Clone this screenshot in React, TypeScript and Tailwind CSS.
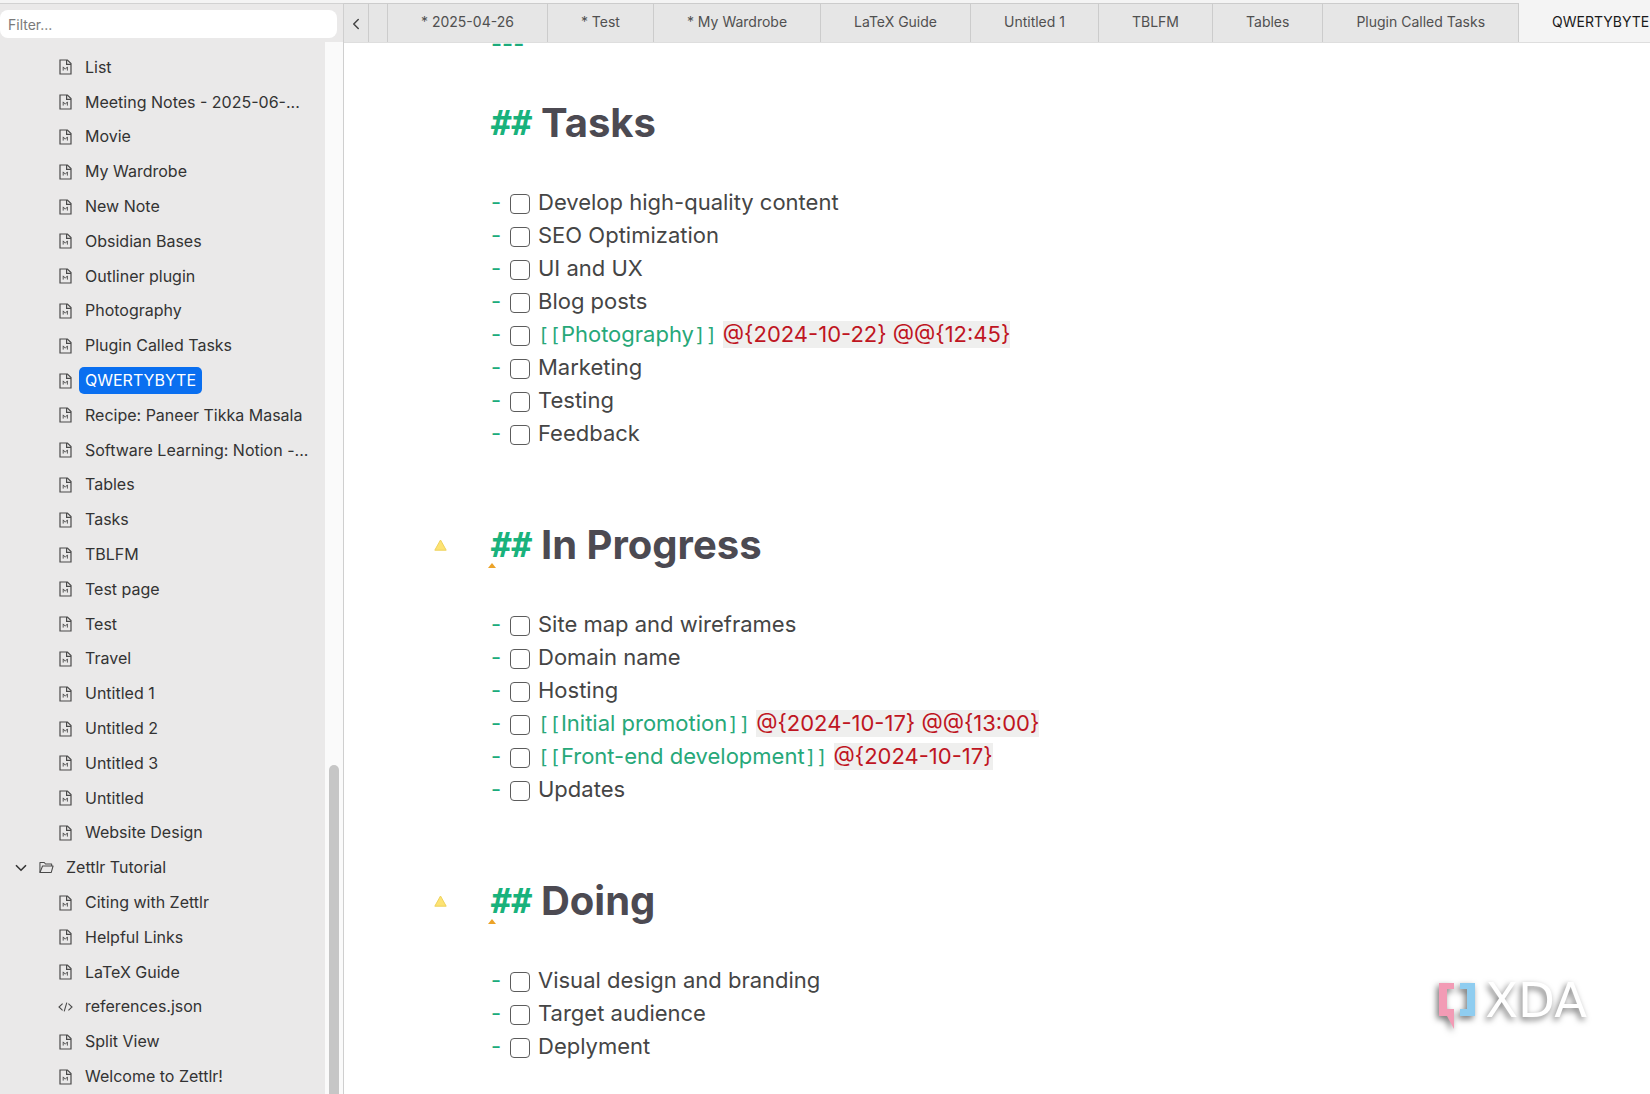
import { useState } from "react";
import { ChevronLeft } from "lucide-react";
import clsx from "clsx";

type TreeEntry = {
  name: string;
  kind: "markdown" | "code" | "folder";
};

type Task = {
  text?: string;
  link?: string;
  code?: string;
};

type Section = {
  title: string;
  warning?: boolean;
  tasks: Task[];
};

const md = (name: string): TreeEntry => ({ name, kind: "markdown" });

const TREE: TreeEntry[] = [
  md("List"),
  md("Meeting Notes - 2025-06-..."),
  md("Movie"),
  md("My Wardrobe"),
  md("New Note"),
  md("Obsidian Bases"),
  md("Outliner plugin"),
  md("Photography"),
  md("Plugin Called Tasks"),
  md("QWERTYBYTE"),
  md("Recipe: Paneer Tikka Masala"),
  md("Software Learning: Notion -..."),
  md("Tables"),
  md("Tasks"),
  md("TBLFM"),
  md("Test page"),
  md("Test"),
  md("Travel"),
  md("Untitled 1"),
  md("Untitled 2"),
  md("Untitled 3"),
  md("Untitled"),
  md("Website Design"),
  { name: "Zettlr Tutorial", kind: "folder" },
  md("Citing with Zettlr"),
  md("Helpful Links"),
  md("LaTeX Guide"),
  { name: "references.json", kind: "code" },
  md("Split View"),
  md("Welcome to Zettlr!"),
];

const TABS = [
  "* 2025-04-26",
  "* Test",
  "* My Wardrobe",
  "LaTeX Guide",
  "Untitled 1",
  "TBLFM",
  "Tables",
  "Plugin Called Tasks",
  "QWERTYBYTE",
];

const SECTIONS: Section[] = [
  {
    title: "Tasks",
    tasks: [
      { text: "Develop high-quality content" },
      { text: "SEO Optimization" },
      { text: "UI and UX" },
      { text: "Blog posts" },
      { link: "Photography", code: "@{2024-10-22} @@{12:45}" },
      { text: "Marketing" },
      { text: "Testing" },
      { text: "Feedback" },
    ],
  },
  {
    title: "In Progress",
    warning: true,
    tasks: [
      { text: "Site map and wireframes" },
      { text: "Domain name" },
      { text: "Hosting" },
      { link: "Initial promotion", code: "@{2024-10-17} @@{13:00}" },
      { link: "Front-end development", code: "@{2024-10-17}" },
      { text: "Updates" },
    ],
  },
  {
    title: "Doing",
    warning: true,
    tasks: [
      { text: "Visual design and branding" },
      { text: "Target audience" },
      { text: "Deplyment" },
    ],
  },
];

function MarkdownFileIcon() {
  return (
    <svg width="13" height="16" viewBox="0 0 13 16" fill="none" stroke="#4a4a4a" strokeWidth="1.2">
      <path d="M1 1h7.4L12 4.6V15H1z" />
      <path d="M7.6 1v4.3H12" />
      <path d="M4.2 11.6V7.9l2.1 2.3 2.1-2.3v3.7" strokeWidth="0.9" />
    </svg>
  );
}

function CodeFileIcon() {
  return (
    <svg width="15" height="10" viewBox="0 0 15 10" fill="none" stroke="#4a4a4a" strokeWidth="1.1">
      <path d="M4.6 1.6 1 5l3.6 3.4M10.4 1.6 14 5l-3.6 3.4M8.8.6 6.2 9.4" />
    </svg>
  );
}

function FolderIcon() {
  return (
    <svg width="16" height="13" viewBox="0 0 16 13" fill="none" stroke="#4a4a4a" strokeWidth="1.1" strokeLinejoin="round">
      <path d="M1 11.8V1.2h4.6l1.3 1.6h6.6v2" />
      <path d="M1 11.8 3.8 4.9H15l-1.9 6.9z" />
    </svg>
  );
}

function Caret() {
  return (
    <svg width="12" height="8" viewBox="0 0 12 8" fill="none" stroke="#333" strokeWidth="1.6">
      <path d="m1 1.2 5 5 5-5" />
    </svg>
  );
}

function FileTree() {
  const [selected, setSelected] = useState("QWERTYBYTE");

  return (
    <ul className="flex min-w-0 flex-1 flex-col pt-2">
      {TREE.map((entry) => (
        <li key={entry.name} className="flex min-h-0 flex-1">
          <button
            type="button"
            onClick={() => setSelected(entry.name)}
            className={clsx(
              "flex w-full items-center gap-[6px] text-left",
              entry.kind === "folder" ? "pl-[15px]" : "pl-[58px]"
            )}
          >
            {entry.kind === "folder" && (
              <span className="flex w-[18px] shrink-0">
                <Caret />
              </span>
            )}
            <span className="flex w-[15px] shrink-0 justify-center">
              {entry.kind === "markdown" && <MarkdownFileIcon />}
              {entry.kind === "code" && <CodeFileIcon />}
              {entry.kind === "folder" && <FolderIcon />}
            </span>
            <span
              className={clsx(
                "rounded-[5px] px-[6px] text-[16px] leading-[27px] whitespace-nowrap",
                selected === entry.name ? "bg-[#0a6ff0] text-white" : "text-[#333]"
              )}
            >
              {entry.name}
            </span>
          </button>
        </li>
      ))}
    </ul>
  );
}

function Sidebar() {
  return (
    <aside className="flex w-[344px] shrink-0 flex-col border-r border-[#cfcfcf] bg-[#eae9e9]">
      <div className="h-[39px] shrink-0 border-t border-[#d2d2d2] pt-[6px] pr-[6px]">
        <input
          type="text"
          aria-label="Filter"
          placeholder="Filter..."
          className="block h-[28px] w-full rounded-[8px] bg-white px-2 text-[14px] text-[#333] outline-none placeholder:text-[#7a7a7a]"
        />
      </div>
      <div className="flex min-h-0 flex-1">
        <FileTree />
        <div className="flex w-[18px] flex-col items-center bg-[#fafafa]">
          <div className="flex-[687]" />
          <div className="w-[10px] flex-[313] rounded-t-full bg-[#c6c6c6]" />
        </div>
      </div>
    </aside>
  );
}

function TabBar() {
  const [active, setActive] = useState("QWERTYBYTE");

  return (
    <nav className="flex h-[40px] shrink-0 overflow-hidden border-b border-[#dedede] bg-[#e6e6e6]">
      <button
        type="button"
        aria-label="Scroll tabs left"
        className="flex w-[25px] shrink-0 items-center justify-center border-t border-r border-[#cccccc] pt-[2px] text-[#444]"
      >
        <ChevronLeft className="h-[18px] w-[18px]" />
      </button>
      <div className="w-[19px] shrink-0 border-t border-r border-[#cccccc]" />
      {TABS.map((tab) => (
        <button
          key={tab}
          type="button"
          onClick={() => setActive(tab)}
          className={clsx(
            "shrink-0 border-t border-r px-[33px] pb-[3px] text-[14px] whitespace-nowrap",
            active === tab ? "border-[#f4f4f4] bg-[#f4f4f4] text-[#1a1a1a]" : "border-[#cccccc] text-[#505050]"
          )}
        >
          {tab}
        </button>
      ))}
    </nav>
  );
}

function TaskLine({ task, id }: { task: Task; id: string }) {
  return (
    <li className="flex h-[33px] items-center text-[22px] text-[#454545]">
      <span className="w-[19px] text-[#1cab7c]">-</span>
      <input
        id={id}
        type="checkbox"
        className="mt-[3px] mr-2 h-5 w-5 appearance-none rounded-[4px] border border-[#5c5c5c] bg-white checked:bg-[#0a6ff0]"
      />
      <label htmlFor={id} className="flex items-center whitespace-pre">
        {task.text}
        {task.link && (
          <span className="text-[#27a879]">
            <span className="font-['DejaVu_Sans_Mono'] text-[19px]">[[</span>
            {task.link}
            <span className="font-['DejaVu_Sans_Mono'] text-[19px]">]]</span>
          </span>
        )}
        {task.code && <code className="ml-[6px] bg-[#efefee] font-['Inter'] leading-[27px] text-[#bf1522]">{task.code}</code>}
      </label>
    </li>
  );
}

function Editor() {
  return (
    <main className="min-h-0 flex-1 overflow-hidden bg-white pl-[147px]">
      <p className="-mt-[16px] h-[33px] text-[24px] leading-[33px] font-medium text-[#1cab7c]">---</p>
      {SECTIONS.map((section) => (
        <section key={section.title} className="pt-[33px] pb-[32px]">
          <h2 className="relative flex h-[59px] items-center gap-[9px] text-[40px] font-bold text-[#4c4a52]">
            {section.warning && (
              <>
                <svg className="absolute top-6 -left-[57px]" width="13" height="12" viewBox="0 0 13 12">
                  <path d="M6.5 1 12.2 11.2H.8z" fill="#fde373" stroke="#eed25c" strokeLinejoin="round" />
                </svg>
                <svg className="absolute bottom-[6px] -left-[3px]" width="8" height="5" viewBox="0 0 8 5">
                  <path d="M4 0 8 5H0z" fill="#eca328" />
                </svg>
              </>
            )}
            <span className="pt-[2px] font-['DejaVu_Sans_Mono'] text-[34px] text-[#19b27c]">##</span>
            {section.title}
          </h2>
          <ul className="pt-[34px]">
            {section.tasks.map((task, i) => (
              <TaskLine key={i} task={task} id={`${section.title}-${i}`} />
            ))}
          </ul>
        </section>
      ))}
    </main>
  );
}

function Watermark() {
  return (
    <div className="absolute right-[63px] bottom-[60px] flex items-start drop-shadow-[-2px_3px_3px_rgba(0,0,0,0.55)]">
      <svg width="44" height="54" viewBox="0 0 44 54">
        <path d="M6 3h15v6h-7v20h7v20l-7-13H6z" fill="#f29bb5" />
        <path d="M27 3h15v33H27v-7h7V9h-7z" fill="#8fcdf0" />
      </svg>
      <span className="pl-2 font-['DejaVu_Sans'] text-[48px] leading-[40px] text-white">XDA</span>
    </div>
  );
}

export default function App() {
  return (
    <div className="relative flex h-screen flex-col overflow-hidden bg-[#f4f4f4] pt-[3px] font-['Inter',sans-serif]">
      <div className="flex min-h-0 flex-1">
        <Sidebar />
        <div className="flex min-w-0 flex-1 flex-col">
          <TabBar />
          <Editor />
        </div>
      </div>
      <Watermark />
    </div>
  );
}
